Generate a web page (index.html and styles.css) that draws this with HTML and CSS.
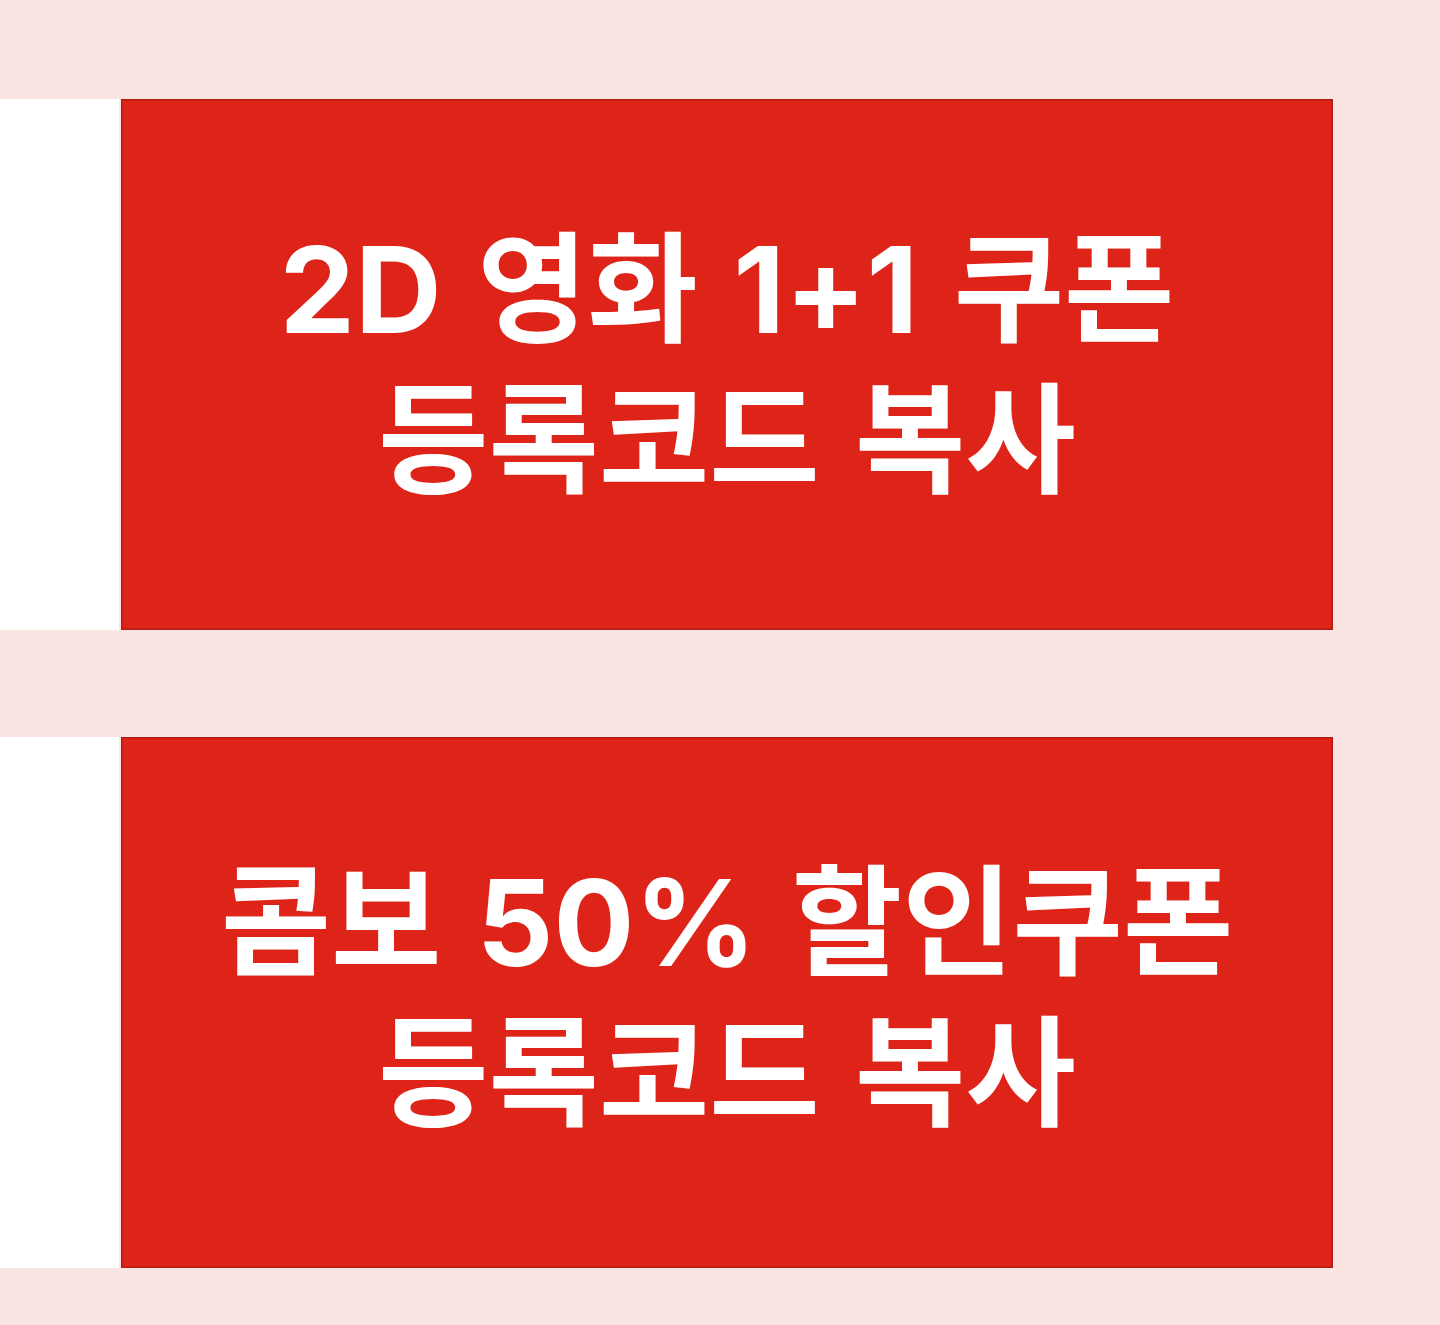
FILE: index.html
```html
<!DOCTYPE html>
<html lang="ko">
<head>
<meta charset="utf-8">
<title>쿠폰 등록코드</title>
<link rel="stylesheet" href="styles.css">
</head>
<body>
  <main class="coupons">
    <div class="coupon-row">
      <div class="coupon-side"></div>
      <button class="coupon-btn" type="button">
        <span class="line">2D 영화 1+1 쿠폰</span>
        <span class="line">등록코드 복사</span>
      </button>
    </div>
    <div class="coupon-row">
      <div class="coupon-side"></div>
      <button class="coupon-btn coupon-btn--combo" type="button">
        <span class="line">콤보 50% 할인쿠폰</span>
        <span class="line">등록코드 복사</span>
      </button>
    </div>
  </main>
</body>
</html>
```
FILE: styles.css
```css
html, body {
  margin: 0;
  padding: 0;
}

body {
  background: #fbe5e3;
  width: 1440px;
  height: 1325px;
  overflow: hidden;
  font-family: "Inter", "Noto Sans CJK KR", "Noto Sans", sans-serif;
}

.coupons {
  display: flex;
  flex-direction: column;
  gap: 107px;
  padding-top: 99px;
}

.coupon-row {
  display: flex;
  height: 531px;
}

.coupon-side {
  width: 119px;
  background: #ffffff;
  margin-right: 2px;
}

.coupon-btn {
  width: 1212px;
  border: none;
  margin: 0;
  padding: 0;
  background: #de2318;
  box-shadow: inset 0 0 2px 1px rgba(110, 25, 15, 0.55);
  color: #ffffff;
  font-family: inherit;
  font-weight: 700;
  font-size: 120px;
  line-height: 151px;
  letter-spacing: 0;
  word-spacing: 7px;
  display: flex;
  flex-direction: column;
  align-items: center;
  justify-content: center;
  cursor: pointer;
}

.coupon-btn--combo {
  padding-bottom: 10px;
}

.line {
  display: block;
  white-space: nowrap;
}
```
